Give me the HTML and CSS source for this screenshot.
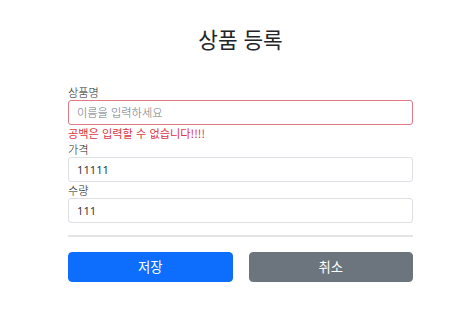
FILE: index.html
```html
<!DOCTYPE html>
<html lang="ko">
<head>
<meta charset="utf-8">
<title>상품 등록</title>
<link rel="stylesheet" href="styles.css">
</head>
<body>
<div class="container">
  <div class="header">
    <h2 class="title">상품 등록</h2>
  </div>
  <form class="form">
    <div class="field">
      <label class="label" for="itemName">상품명</label>
      <input class="control control-error" id="itemName" type="text" placeholder="이름을 입력하세요">
      <div class="field-error">공백은 입력할 수 없습니다!!!!</div>
    </div>
    <div class="field">
      <label class="label" for="price">가격</label>
      <input class="control" id="price" type="text" value="11111">
    </div>
    <div class="field">
      <label class="label" for="quantity">수량</label>
      <input class="control" id="quantity" type="text" value="111">
    </div>
    <hr class="divider">
    <div class="actions">
      <button class="btn btn-primary" type="button">저장</button>
      <button class="btn btn-secondary" type="button">취소</button>
    </div>
  </form>
</div>
</body>
</html>
```

FILE: styles.css
```css
html, body {
  margin: 0;
  padding: 0;
  background: #ffffff;
}

body {
  font-family: "Noto Sans CJK KR", "Noto Sans", sans-serif;
  font-size: 11.2px;
  font-weight: 300;
  line-height: 1.5;
  color: #212529;
}

.container {
  width: 345px;
  margin-left: 68px;
}

.header {
  padding-top: 26px;
  margin-bottom: 32.4px;
  text-align: center;
}

.title {
  margin: 0;
  font-size: 21.33px;
  font-weight: 400;
  line-height: 1.2;
  color: #212529;
}

.form {
  margin: 0;
}

.field {
  display: flex;
  flex-direction: column;
}

.label {
  display: block;
  height: 16px;
  line-height: 16px;
  color: #1a1d20;
}

.control {
  box-sizing: border-box;
  width: 100%;
  height: 25px;
  margin: 0;
  padding: 0 8px;
  font-family: "Noto Sans", "Noto Sans CJK KR", sans-serif;
  font-size: 11.2px;
  font-weight: 400;
  color: #33383d;
  background: #ffffff;
  border: 1px solid #dcdfe3;
  border-radius: 3px;
  outline: none;
}

.control::placeholder {
  font-family: "Noto Sans CJK KR", sans-serif;
  color: #6c757d;
  font-weight: 300;
}

.control-error {
  border-color: #e27a85;
}

.field-error {
  height: 16px;
  line-height: 16px;
  font-weight: 400;
  color: #dc3545;
}

.divider {
  margin: 12px 0 15px;
  height: 0;
  border: 0;
  border-top: 2px solid #e5e5e5;
}

.actions {
  display: flex;
  gap: 16px;
}

.btn {
  flex: 1;
  height: 30px;
  padding: 0;
  font-family: inherit;
  font-size: 13.33px;
  font-weight: 400;
  color: #ffffff;
  border: 1px solid transparent;
  border-radius: 4px;
  cursor: pointer;
}

.btn-primary {
  background: #0d6efd;
  border-color: #0d6efd;
}

.btn-secondary {
  background: #6c757d;
  border-color: #6c757d;
}
```
